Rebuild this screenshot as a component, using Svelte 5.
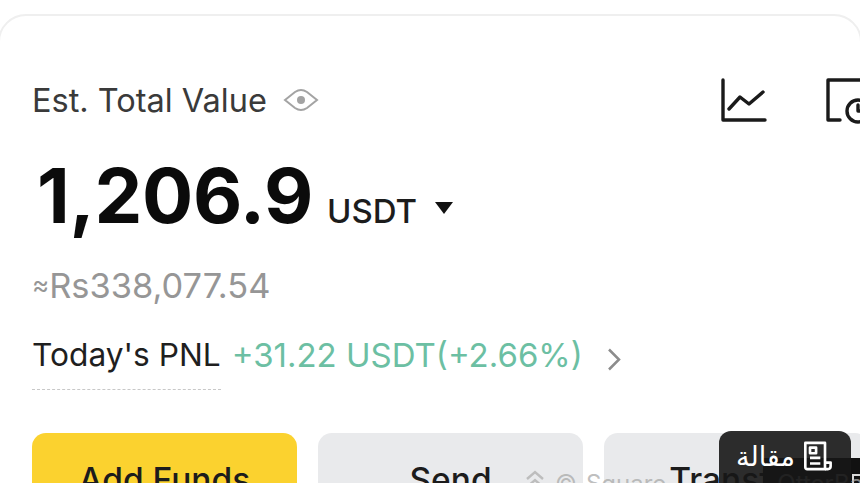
<script lang="ts">
	const actions = [
		{ label: 'Add Funds', primary: true },
		{ label: 'Send', primary: false },
		{ label: 'Transfer', primary: false }
	];
</script>

<main class="page">
	<section class="card">
		<div class="top-row">
			<div class="label-wrap">
				<span class="label">Est. Total Value</span>
				<svg class="eye" viewBox="0 0 36 24" fill="none" stroke="#a3a3a3" stroke-width="2">
					<path d="M2 12 L12 4 Q18 0 24 4 L34 12 L24 20 Q18 24 12 20 Z" />
					<circle cx="18" cy="12" r="4" fill="#a3a3a3" stroke="none" />
				</svg>
			</div>
			<div class="tools">
				<svg class="tool" viewBox="0 0 46 46" fill="none" stroke="#1a1a1a" stroke-width="3.4" stroke-linecap="round" stroke-linejoin="round">
					<path d="M2 2 V42 H44" />
					<path d="M8 31 L19 19 L28 26 L42 14" />
				</svg>
				<svg class="tool" viewBox="0 0 46 46" fill="none" stroke="#1a1a1a" stroke-width="3.4" stroke-linecap="round" stroke-linejoin="round">
					<path d="M14 42 H2 V2 H44 V20" />
					<circle cx="32" cy="33" r="11" />
					<path d="M32 27 V33 H38" />
				</svg>
			</div>
		</div>

		<div class="value-row">
			<span class="value">1,206.9</span>
			<span class="unit">USDT</span>
			<span class="caret"></span>
		</div>

		<div class="fiat"><span class="approx">≈</span>Rs338,077.54</div>

		<div class="pnl-row">
			<span class="pnl-label">Today's PNL</span>
			<span class="pnl-value">+31.22 USDT(+2.66%)</span>
			<svg class="chevron" viewBox="0 0 12 20" fill="none" stroke="#8c8c8c" stroke-width="2">
				<path d="M2 2 L10 10 L2 18" />
			</svg>
		</div>

		<div class="actions">
			{#each actions as action}
				<button class="action" class:primary={action.primary}>{action.label}</button>
			{/each}
		</div>
	</section>

	<div class="watermark-bar">
		<svg viewBox="0 0 12 12" fill="none" stroke="#d8d8d8" stroke-width="2"><rect x="1" y="1" width="14" height="14" /></svg>
	</div>

	<div class="source">
		<svg viewBox="0 0 20 18" fill="none" stroke="#bdbdbd" stroke-width="2.4"><path d="M2 9 L10 2 L18 9 M2 17 L10 10 L18 17" /></svg>
		<span class="copy">©</span>
		<span>Square</span>
		<span class="handle">OtterBa</span>
	</div>

	<div class="badge" dir="rtl">
		<svg viewBox="0 0 30 32" fill="none" stroke="#fff" stroke-width="2.8" stroke-linejoin="round">
			<path d="M2 2 H23 V30 H4 Q2 30 2 28 Z" />
			<path d="M23 23 H29 V27 Q29 30 26 30 H23" />
			<rect x="7" y="7" width="6.5" height="6" />
			<path d="M7 18 H18 M7 24 H18" />
		</svg>
		<span>مقالة</span>
	</div>
</main>

<style>
	:global(body) {
		margin: 0;
		background: #fff;
	}

	.page {
		position: relative;
		width: 860px;
		height: 483px;
		overflow: hidden;
		font-family: "Inter", "Liberation Sans", sans-serif;
	}

	.card {
		box-sizing: border-box;
		height: 560px;
		margin: 14px -2px 0 -2px;
		padding: 61px 0 0 32px;
		border: 2px solid #efefef;
		border-radius: 28px;
	}

	.top-row {
		display: flex;
		justify-content: space-between;
		align-items: center;
		height: 46px;
	}

	.label-wrap {
		display: flex;
		align-items: center;
		gap: 16px;
	}

	.label {
		font-size: 32.5px;
		color: #3a3a3a;
	}

	.eye {
		width: 36px;
		height: 24px;
	}

	.tools {
		display: flex;
		gap: 59px;
		margin: 2px -12px 0 0;
	}

	.tool {
		width: 46px;
		height: 46px;
	}

	.value-row {
		display: flex;
		align-items: baseline;
		margin-top: 26px;
	}

	.value {
		margin-left: 5px;
		font-size: 76px;
		font-weight: 700;
		letter-spacing: -0.3px;
		color: #0b0b0b;
	}

	.unit {
		margin-left: 14px;
		font-size: 33px;
		font-weight: 500;
		color: #1c1c1c;
	}

	.caret {
		align-self: center;
		margin: 26px 0 0 18px;
		border: 9px solid transparent;
		border-top: 12px solid #111;
		border-bottom: 0;
	}

	.fiat {
		margin-top: 24px;
		font-size: 34.4px;
		color: #969696;
	}

	.approx {
		font-size: 26px;
		vertical-align: 4px;
	}

	.pnl-row {
		display: flex;
		align-items: center;
		margin-top: 29px;
	}

	.pnl-label {
		padding-bottom: 15px;
		border-bottom: 1px dashed #c8c8c8;
		font-size: 31.7px;
		color: #1f1f1f;
	}

	.pnl-value {
		margin: 0 0 15px 11px;
		font-size: 33px;
		color: #6cbfa3;
	}

	.chevron {
		width: 16px;
		height: 25px;
		margin: 0 0 6px 23px;
	}

	.actions {
		display: flex;
		gap: 21px;
		margin-top: 43px;
	}

	.action {
		flex: none;
		width: 265px;
		height: 92px;
		padding: 2px 0 0;
		border: 0;
		border-radius: 14px;
		background: #e9eaec;
		font: 500 33.5px "Inter", "Liberation Sans", sans-serif;
		color: #1c1c1c;
	}

	.action.primary {
		background: #fbd22f;
	}

	.watermark-bar {
		position: absolute;
		left: 763px;
		right: 0;
		top: 458px;
		bottom: 0;
		background: #111;
	}

	.watermark-bar svg {
		position: absolute;
		right: -4px;
		top: 16px;
		width: 12px;
		height: 12px;
	}

	.source {
		position: absolute;
		left: 525px;
		top: 470px;
		display: flex;
		align-items: flex-start;
		gap: 9px;
		font-size: 24px;
		line-height: 28px;
		color: rgba(170, 170, 170, 0.75);
		white-space: nowrap;
	}

	.source svg {
		width: 20px;
		height: 18px;
	}

	.copy {
		margin-left: 1px;
	}

	.handle {
		margin-left: 102px;
	}

	.badge {
		position: absolute;
		left: 719px;
		top: 431px;
		display: flex;
		align-items: center;
		justify-content: flex-start;
		gap: 8px;
		box-sizing: border-box;
		width: 132px;
		height: 52px;
		padding: 0 19px 2px;
		border-radius: 12px 12px 0 0;
		background: rgba(23, 23, 23, 0.9);
		font-family: "DejaVu Sans", sans-serif;
		font-size: 27px;
		color: #fff;
	}

	.badge svg {
		width: 29px;
		height: 30px;
		flex: none;
	}
</style>
